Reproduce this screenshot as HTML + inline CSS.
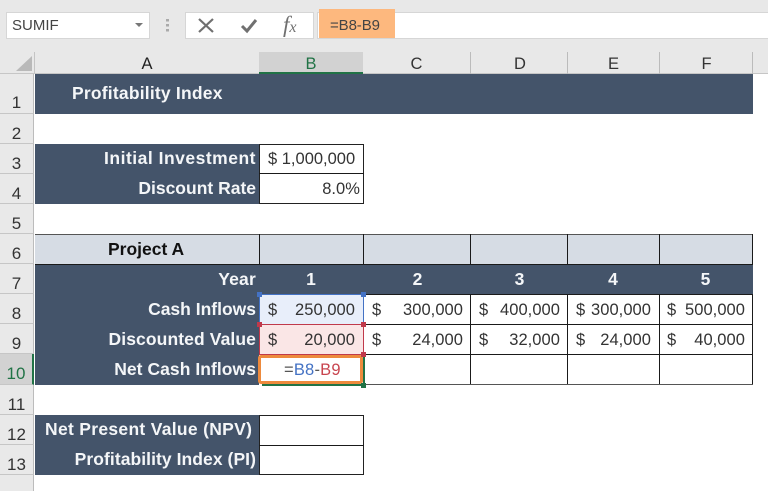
<!DOCTYPE html>
<html><head><meta charset="utf-8">
<style>
html,body{margin:0;padding:0;background:#fff}
#p{position:relative;width:768px;height:491px;overflow:hidden;background:#fff;font-family:"Liberation Sans",sans-serif;color:#222;filter:blur(.3px)}
#p div{position:absolute;box-sizing:border-box}
.t{white-space:nowrap;line-height:20px;height:20px}
.b{font-weight:bold;color:#f4f6f8;font-size:17.5px}
.r{text-align:right}
.n{font-size:16.5px;letter-spacing:.05px;color:#333}
.rh{left:0;width:34px;background:#e9e9e9;border-bottom:1px solid #c6c6c6;border-right:1px solid #bcbcbc;text-align:center;font-size:17px;color:#333;line-height:20px;padding-top:10px}
.ch{top:52px;height:22px;text-align:center;font-size:16.5px;color:#333;line-height:24px}
.vl{width:1px;background:#1a1a1a}
.hl{height:1px;background:#1a1a1a}
</style></head><body>
<div id="p">
<!-- toolbar -->
<div style="left:0;top:0;width:768px;height:74px;background:#e8e8e8"></div>
<div style="left:6px;top:12px;width:144px;height:27px;background:#fff;border:1px solid #d6d6d6"></div>
<div class="t" style="left:12px;top:16px;font-size:15px;color:#444">SUMIF</div>
<svg style="position:absolute;left:134px;top:22px" width="10" height="6"><path d="M1 1h8L5 5z" fill="#777"/></svg>
<svg style="position:absolute;left:164px;top:18px" width="8" height="16"><g fill="#aaa"><rect x="2" y="1" width="3" height="2.5"/><rect x="2" y="6" width="3" height="2.5"/><rect x="2" y="11" width="3" height="2.5"/></g></svg>
<div style="left:185px;top:12px;width:129px;height:27px;background:#fff;border:1px solid #d6d6d6"></div>
<svg style="position:absolute;left:196px;top:17px" width="20" height="17"><path d="M3 2L17 15M17 2L3 15" stroke="#707070" stroke-width="2.2" fill="none"/></svg>
<svg style="position:absolute;left:239px;top:17px" width="20" height="17"><path d="M3 9L8 14L17 3" stroke="#707070" stroke-width="3" fill="none"/></svg>
<div class="t" style="left:283px;top:15px;font-family:'Liberation Serif',serif;font-style:italic;font-size:23px;color:#707070">f<span style="font-size:16px">x</span></div>
<div style="left:317px;top:12px;width:451px;height:27px;background:#fff;border:1px solid #d6d6d6;border-right:0"></div>
<div style="left:319px;top:9px;width:76px;height:29px;background:#fdb87e"></div>
<div class="t" style="left:330px;top:16px;font-size:15px;color:#444;letter-spacing:-.1px">=B8-B9</div>
<!-- headers -->
<svg style="position:absolute;left:14px;top:54px" width="20" height="18"><path d="M18 2V17H2z" fill="#b9b9b9"/></svg>
<div style="left:34px;top:52px;width:1px;height:22px;background:#c4c4c4"></div>
<div style="left:0;top:73px;width:768px;height:1px;background:#c6c6c6"></div>
<div class="ch" style="left:35px;width:224px;color:#222">A</div>
<div class="ch" style="left:259px;width:104px;background:#d2d2d2;border-bottom:2px solid #217346;color:#217346">B</div>
<div class="ch" style="left:363px;width:107px">C</div>
<div class="ch" style="left:472px;width:96px">D</div>
<div class="ch" style="left:568px;width:91px">E</div>
<div class="ch" style="left:660px;width:93px">F</div>
<div style="left:470px;top:52px;width:1px;height:22px;background:#bbb"></div>
<div style="left:567px;top:52px;width:1px;height:22px;background:#bbb"></div>
<div style="left:659px;top:52px;width:1px;height:22px;background:#bbb"></div>
<div style="left:752px;top:52px;width:1px;height:22px;background:#bbb"></div>
<!-- row headers -->
<div class="rh" style="top:74px;height:40px;padding-top:19px">1</div>
<div class="rh" style="top:114px;height:30px;padding-top:10px">2</div>
<div class="rh" style="top:144px;height:30px">3</div>
<div class="rh" style="top:174px;height:30px">4</div>
<div class="rh" style="top:204px;height:30px">5</div>
<div class="rh" style="top:234px;height:30px">6</div>
<div class="rh" style="top:264px;height:30px">7</div>
<div class="rh" style="top:294px;height:30px">8</div>
<div class="rh" style="top:324px;height:30px">9</div>
<div class="rh" style="top:354px;height:31px;background:#d2d2d2;color:#217346;border-right:2px solid #217346">10</div>
<div class="rh" style="top:385px;height:30px">11</div>
<div class="rh" style="top:415px;height:30px">12</div>
<div class="rh" style="top:445px;height:30px">13</div>
<div class="rh" style="top:475px;height:16px;border-bottom:0;padding:0"></div>
<!-- dark fills -->
<div style="left:35px;top:74px;width:718px;height:40px;background:#44546a"></div>
<div style="left:35px;top:144px;width:224px;height:60px;background:#44546a"></div>
<div style="left:35px;top:235px;width:718px;height:29px;background:#d6dce4"></div>
<div style="left:35px;top:264px;width:718px;height:30px;background:#44546a"></div>
<div style="left:35px;top:294px;width:224px;height:91px;background:#44546a"></div>
<div style="left:35px;top:415px;width:224px;height:60px;background:#44546a"></div>
<!-- labels -->
<div class="t b" style="left:72px;top:83px;letter-spacing:.2px">Profitability Index</div>
<div class="t b r" style="right:512px;top:148px;letter-spacing:.5px">Initial Investment</div>
<div class="t b r" style="right:512px;top:178px">Discount Rate</div>
<div class="t b" style="left:108px;top:239px;color:#111">Project A</div>
<div class="t b r" style="right:512px;top:269px;letter-spacing:.2px">Year</div>
<div class="t b r" style="right:512px;top:299px">Cash Inflows</div>
<div class="t b r" style="right:512px;top:329px;letter-spacing:.1px">Discounted Value</div>
<div class="t b r" style="right:512px;top:359px;letter-spacing:.05px">Net Cash Inflows</div>
<div class="t b" style="left:45px;top:419px;letter-spacing:.3px">Net Present Value (NPV)</div>
<div class="t b r" style="right:512px;top:449px;letter-spacing:.06px">Profitability Index (PI)</div>
<div class="t b" style="left:259px;width:104px;top:269px;text-align:center">1</div>
<div class="t b" style="left:364px;width:107px;top:269px;text-align:center">2</div>
<div class="t b" style="left:471px;width:97px;top:269px;text-align:center">3</div>
<div class="t b" style="left:567px;width:92px;top:269px;text-align:center">4</div>
<div class="t b" style="left:659px;width:93px;top:269px;text-align:center">5</div>
<!-- top boxes -->
<div style="left:259px;top:144px;width:105px;height:60px;border:1px solid #222"></div>
<div class="hl" style="left:259px;top:173px;width:105px"></div>
<div class="t n" style="left:268px;top:149px;letter-spacing:0">$ 1,000,000</div>
<div class="t n r" style="right:408px;top:179px">8.0%</div>
<!-- grid project -->
<div class="hl" style="left:35px;top:234px;width:718px;background:#555"></div>
<div class="vl" style="left:259px;top:234px;height:30px"></div>
<div class="vl" style="left:363px;top:234px;height:30px"></div>
<div class="vl" style="left:470px;top:234px;height:30px"></div>
<div class="vl" style="left:567px;top:234px;height:30px"></div>
<div class="vl" style="left:659px;top:234px;height:30px"></div>
<div class="vl" style="left:752px;top:234px;height:30px"></div>
<div class="vl" style="left:470px;top:294px;height:91px"></div>
<div class="vl" style="left:567px;top:294px;height:91px"></div>
<div class="vl" style="left:659px;top:294px;height:91px"></div>
<div class="vl" style="left:752px;top:294px;height:91px"></div>
<div class="hl" style="left:35px;top:264px;width:718px"></div>
<div class="hl" style="left:363px;top:294px;width:390px"></div>
<div class="hl" style="left:363px;top:324px;width:390px"></div>
<div class="hl" style="left:363px;top:354px;width:390px"></div>
<div class="hl" style="left:363px;top:384px;width:390px;background:#555"></div>
<!-- cell fills B -->
<div style="left:260px;top:295px;width:103px;height:29px;background:#e8eefa"></div>
<div style="left:260px;top:325px;width:103px;height:29px;background:#fae6e6"></div>
<!-- selection -->
<div style="left:259px;top:294px;width:105px;height:31px;border:1.5px solid #4472c4"></div>
<div style="left:259px;top:324px;width:105px;height:31px;border:1.5px solid #c0394b"></div>
<div style="left:258px;top:355px;width:105px;height:29px;background:#fff;border:3px solid #ed8a3d;border-radius:3px"></div>
<div style="left:262px;top:384px;width:102px;height:1.5px;background:#217346"></div>
<div style="left:363px;top:356px;width:1.5px;height:29px;background:#217346"></div>
<div style="left:257px;top:292px;width:5px;height:5px;background:#4472c4"></div>
<div style="left:361px;top:292px;width:5px;height:5px;background:#4472c4"></div>
<div style="left:257px;top:322px;width:5px;height:5px;background:#c0394b"></div>
<div style="left:361px;top:322px;width:5px;height:5px;background:#c0394b"></div>
<div style="left:361px;top:352px;width:5px;height:5px;background:#c0394b"></div>
<div style="left:361px;top:383px;width:5px;height:5px;background:#217346"></div>
<!-- data -->
<div class="t n" style="left:268px;top:300px">$</div><div class="t n r" style="right:413px;top:300px">250,000</div>
<div class="t n" style="left:268px;top:330px">$</div><div class="t n r" style="right:413px;top:330px">20,000</div>
<div class="t n" style="left:372px;top:300px">$</div><div class="t n r" style="right:305px;top:300px">300,000</div>
<div class="t n" style="left:372px;top:330px">$</div><div class="t n r" style="right:305px;top:330px">24,000</div>
<div class="t n" style="left:479px;top:300px">$</div><div class="t n r" style="right:208px;top:300px">400,000</div>
<div class="t n" style="left:479px;top:330px">$</div><div class="t n r" style="right:208px;top:330px">32,000</div>
<div class="t n" style="left:576px;top:300px">$</div><div class="t n r" style="right:117px;top:300px">300,000</div>
<div class="t n" style="left:576px;top:330px">$</div><div class="t n r" style="right:117px;top:330px">24,000</div>
<div class="t n" style="left:667px;top:300px">$</div><div class="t n r" style="right:23px;top:300px">500,000</div>
<div class="t n" style="left:667px;top:330px">$</div><div class="t n r" style="right:23px;top:330px">40,000</div>
<div class="t n" style="left:284px;top:360px;letter-spacing:.2px"><span style="color:#555">=</span><span style="color:#4472c4">B8</span><span style="color:#555">-</span><span style="color:#c8454f">B9</span></div>
<!-- bottom boxes -->
<div style="left:259px;top:415px;width:105px;height:60px;border:1px solid #222"></div>
<div class="hl" style="left:259px;top:445px;width:105px"></div>
</div>
</body></html>
